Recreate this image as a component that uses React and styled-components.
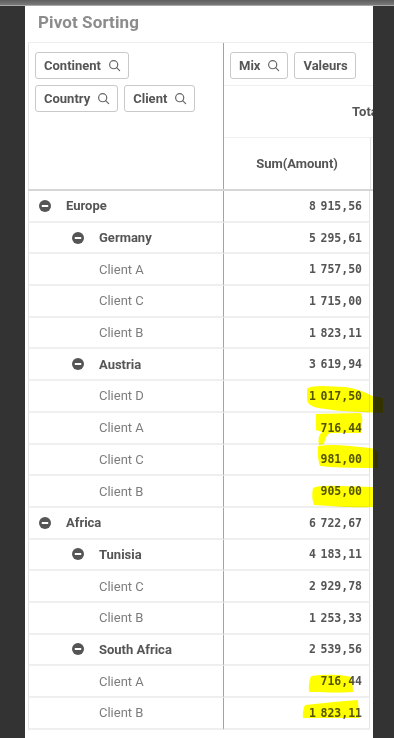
import React from "react";
import styled, { createGlobalStyle } from "styled-components";

const Global = createGlobalStyle`
  html, body { margin: 0; padding: 0; background: #333333; }
  body { font-family: Roboto, "Liberation Sans", sans-serif; }
  * { box-sizing: border-box; }
`;

const Page = styled.div`
  position: relative;
  width: 394px;
  height: 738px;
  background: #333333;
  overflow: hidden;
  display: flex;
  flex-direction: column;
`;

const TopStrip = styled.div`
  height: 6px;
  flex: none;
  background: linear-gradient(#5e5e5e, #7a7a7a);
  border-bottom: 1px solid #a8a8a8;
`;

const Body = styled.div`
  flex: 1;
  display: flex;
  padding-left: 25px;
`;

const Panel = styled.div`
  width: 348px;
  background: #ffffff;
  overflow: hidden;
  display: flex;
  flex-direction: column;
`;

const Title = styled.div`
  height: 36px;
  padding: 6px 0 0 13px;
  font-size: 17px;
  font-weight: 700;
  color: #8c8c8c;
  letter-spacing: 0.1px;
`;

const Table = styled.div`
  margin-left: 3px;
  width: 400px;
  border-top: 1px solid #ededed;
`;

const HeaderGrid = styled.div`
  display: grid;
  grid-template-columns: 195px 1fr;
  border-bottom: 2px solid #d6d6d6;
`;

const LeftHeader = styled.div`
  border-left: 1px solid #e4e4e4;
  padding: 9px 6px;
  display: flex;
  flex-wrap: wrap;
  align-content: flex-start;
  gap: 6px;
`;

const RightHeader = styled.div`
  border-left: 1px solid #a3a3a3;
  display: flex;
  flex-direction: column;
`;

const ChipRow = styled.div`
  display: flex;
  gap: 6px;
  padding: 9px 6px 6px;
  border-bottom: 1px solid #efefef;
`;

const Chip = styled.div`
  height: 27px;
  display: inline-flex;
  align-items: center;
  gap: 7px;
  padding: 0 7px 0 8px;
  border: 1px solid #c9c9c9;
  border-radius: 3px;
  font-size: 13px;
  font-weight: 700;
  color: #555555;
  white-space: nowrap;
`;

const TotalsRow = styled.div`
  height: 52px;
  width: 292px;
  display: flex;
  align-items: center;
  justify-content: center;
  border-bottom: 1px solid #efefef;
  font-size: 13px;
  font-weight: 700;
  color: #555555;
`;

const SumRow = styled.div`
  height: 51px;
  width: 147px;
  display: flex;
  align-items: center;
  justify-content: center;
  border-right: 1px solid #e4e4e4;
  font-size: 13px;
  font-weight: 700;
  color: #555555;
`;

const Row = styled.div`
  display: grid;
  grid-template-columns: 195px 147px;
  height: 31.7px;
`;

const LabelCell = styled.div`
  border-left: 1px solid #e4e4e4;
  border-bottom: 2px solid #efefef;
  display: flex;
  align-items: center;
  padding-left: ${(p) => 10 + p.$level * 33}px;
  gap: 15px;
  font-size: 13px;
  font-weight: ${(p) => (p.$bold ? 700 : 400)};
  color: ${(p) => (p.$bold ? "#555555" : "#7d7d7d")};
`;

const ValueCell = styled.div`
  border-left: 1px solid #a3a3a3;
  border-right: 1px solid #e4e4e4;
  border-bottom: 2px solid #efefef;
  display: flex;
  align-items: center;
  justify-content: flex-end;
  padding-right: 7px;
  font-family: "DejaVu Sans Mono", "Liberation Mono", monospace;
  font-size: 11.5px;
  font-weight: 700;
  word-spacing: -2.5px;
  color: #555555;
`;

const IconSlot = styled.span`
  width: 12px;
  height: 12px;
  flex: none;
  display: inline-flex;
  visibility: ${(p) => (p.$hidden ? "hidden" : "visible")};
`;

const Annotations = styled.svg`
  position: absolute;
  left: 0;
  top: 0;
  width: 394px;
  height: 738px;
  pointer-events: none;
  mix-blend-mode: multiply;
`;

const SearchIcon = () => (
  <svg width="13" height="13" viewBox="0 0 24 24" fill="none" stroke="#666" strokeWidth="2.2" strokeLinecap="round">
    <circle cx="10.5" cy="10.5" r="7.5" />
    <line x1="16" y1="16" x2="21.5" y2="21.5" />
  </svg>
);

const Minus = () => (
  <svg width="12" height="12" viewBox="0 0 12 12">
    <circle cx="6" cy="6" r="6" fill="#555" />
    <rect x="2.8" y="5" width="6.4" height="2" fill="#fff" />
  </svg>
);

const rows = [
  { label: "Europe", level: 0, bold: true, value: "8 915,56" },
  { label: "Germany", level: 1, bold: true, value: "5 295,61" },
  { label: "Client A", level: 1, value: "1 757,50" },
  { label: "Client C", level: 1, value: "1 715,00" },
  { label: "Client B", level: 1, value: "1 823,11" },
  { label: "Austria", level: 1, bold: true, value: "3 619,94" },
  { label: "Client D", level: 1, value: "1 017,50" },
  { label: "Client A", level: 1, value: "716,44" },
  { label: "Client C", level: 1, value: "981,00" },
  { label: "Client B", level: 1, value: "905,00" },
  { label: "Africa", level: 0, bold: true, value: "6 722,67" },
  { label: "Tunisia", level: 1, bold: true, value: "4 183,11" },
  { label: "Client C", level: 1, value: "2 929,78" },
  { label: "Client B", level: 1, value: "1 253,33" },
  { label: "South Africa", level: 1, bold: true, value: "2 539,56" },
  { label: "Client A", level: 1, value: "716,44" },
  { label: "Client B", level: 1, value: "1 823,11" },
];

export default function App() {
  return (
    <>
      <Global />
      <Page>
        <TopStrip />
        <Body>
          <Panel>
            <Title>Pivot Sorting</Title>
            <Table>
              <HeaderGrid>
                <LeftHeader>
                  <Chip>Continent <SearchIcon /></Chip>
                  <Chip>Country <SearchIcon /></Chip>
                  <Chip>Client <SearchIcon /></Chip>
                </LeftHeader>
                <RightHeader>
                  <ChipRow>
                    <Chip>Mix <SearchIcon /></Chip>
                    <Chip>Valeurs</Chip>
                  </ChipRow>
                  <TotalsRow>Totals</TotalsRow>
                  <SumRow>Sum(Amount)</SumRow>
                </RightHeader>
              </HeaderGrid>
              {rows.map((r, i) => (
                <Row key={i}>
                  <LabelCell $level={r.level} $bold={r.bold}>
                    <IconSlot $hidden={!r.bold}><Minus /></IconSlot>
                    {r.label}
                  </LabelCell>
                  <ValueCell>{r.value}</ValueCell>
                </Row>
              ))}
            </Table>
          </Panel>
        </Body>
        <Annotations viewBox="0 0 394 738">
          <g fill="#ffff00">
            <path d="M307,389 Q309,386 322,386 L345,387 Q360,389 372,396 L383,398 L383,413 Q360,412 340,411 L318,408 Q308,406 307,400 Z" />
            <path d="M316,414 L360,413 Q363,414 362,424 L361,433 L330,433 Q325,436 324,444 L319,445 Q317,436 322,432 L316,430 Z" />
            <path d="M318,446 Q330,444 350,446 L370,448 Q378,449 378,455 L378,468 Q350,468 330,467 L320,466 Q317,458 318,446 Z" />
            <path d="M313,488 Q318,485 340,486 L373,487 L374,507 Q350,508 330,506 L314,505 Q311,497 313,488 Z" />
            <path d="M311,676 Q325,674 340,675 L352,677 L353,692 Q335,693 320,692 L309,692 Q308,684 311,676 Z" />
            <path d="M305,705 Q330,702 358,700 L359,718 Q335,718 315,718 L303,718 Q302,711 305,705 Z" />
          </g>
        </Annotations>
      </Page>
    </>
  );
}
